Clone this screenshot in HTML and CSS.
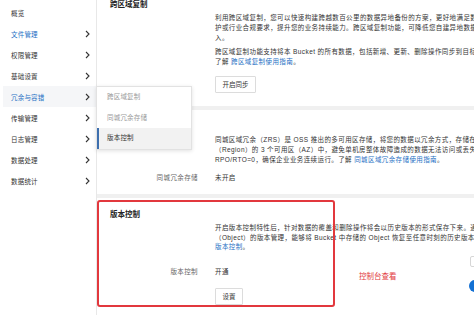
FILE: index.html
```html
<!DOCTYPE html>
<html lang="zh-CN">
<head>
<meta charset="utf-8">
<title>版本控制</title>
<link rel="stylesheet" href="styles.css">
</head>
<body>
<div class="app">
  <aside class="sidebar">
    <ul class="nav">
      <li class="nav-item">概览</li>
      <li class="nav-item is-link">文件管理<svg class="chev" viewBox="0 0 5 8"><polyline points="1,1 4,4 1,7"/></svg></li>
      <li class="nav-item">权限管理<svg class="chev" viewBox="0 0 5 8"><polyline points="1,1 4,4 1,7"/></svg></li>
      <li class="nav-item">基础设置<svg class="chev" viewBox="0 0 5 8"><polyline points="1,1 4,4 1,7"/></svg></li>
      <li class="nav-item is-active">冗余与容错<svg class="chev" viewBox="0 0 5 8"><polyline points="1,1 4,4 1,7"/></svg></li>
      <li class="nav-item">传输管理<svg class="chev" viewBox="0 0 5 8"><polyline points="1,1 4,4 1,7"/></svg></li>
      <li class="nav-item">日志管理<svg class="chev" viewBox="0 0 5 8"><polyline points="1,1 4,4 1,7"/></svg></li>
      <li class="nav-item">数据处理<svg class="chev" viewBox="0 0 5 8"><polyline points="1,1 4,4 1,7"/></svg></li>
      <li class="nav-item">数据统计<svg class="chev" viewBox="0 0 5 8"><polyline points="1,1 4,4 1,7"/></svg></li>
    </ul>
  </aside>

  <main class="main">
    <section class="card card-scrolled">
      <h2 class="card-title">跨区域复制</h2>
      <div class="field">
        <div class="label"></div>
        <div class="content">
          <p class="desc">利用跨区域复制，您可以快速构建跨越数百公里的数据异地备份的方案，更好地满足数据异地容灾保<br>护或行业合规要求，提升您的业务持续能力。跨区域复制功能，可降低您自建异地数据备份带来的成本投<br>入。</p>
          <p class="desc desc-next">跨区域复制功能支持将本 Bucket 的所有数据，包括新增、更新、删除操作同步到目标 Bucket。<br>了解 <a class="link">跨区域复制使用指南</a>。</p>
          <button class="btn btn-gap-l">开启同步</button>
        </div>
      </div>
    </section>

    <section class="card card-zrs">
      <h2 class="card-title">同城冗余存储</h2>
      <div class="field">
        <div class="label"></div>
        <div class="content">
          <p class="desc">同城区域冗余（ZRS）是 OSS 推出的多可用区存储，将您的数据以冗余方式，存储在同一个地域<br>（Region）的 3 个可用区（AZ）中，避免单机房整体故障造成的数据无法访问或丢失，<br>RPO/RTO=0，确保企业业务连续运行。了解 <a class="link">同城区域冗余存储使用指南</a>。</p>
        </div>
      </div>
      <div class="field field-gap-s">
        <div class="label">同城冗余存储</div>
        <div class="content">未开启</div>
      </div>
    </section>

    <section class="card card-last">
      <h2 class="card-title">版本控制</h2>
      <div class="field">
        <div class="label"></div>
        <div class="content">
          <p class="desc">开启版本控制特性后，针对数据的覆盖和删除操作将会以历史版本的形式保存下来。通过文件<br>（Object）的版本管理，能够将 Bucket 中存储的 Object 恢复至任意时刻的历史版本。了解<br><a class="link">版本控制</a>。</p>
        </div>
      </div>
      <div class="field field-gap-l">
        <div class="label">版本控制</div>
        <div class="content">开通</div>
      </div>
      <div class="field field-gap-m">
        <div class="label"></div>
        <div class="content"><button class="btn">设置</button></div>
      </div>
    </section>
  </main>

  <div class="dropdown">
    <div class="dd-item">跨区域复制</div>
    <div class="dd-item">同城冗余存储</div>
    <div class="dd-item is-selected">版本控制</div>
  </div>

  <div class="annot-box"></div>
  <div class="annot-text">控制台查看</div>

  <div class="float-tool float-tool-box"></div>
  <div class="float-tool float-tool-dot"></div>
</div>
</body>
</html>
```

FILE: styles.css
```css
* { box-sizing: border-box; }

body {
  margin: 0;
  width: 474px;
  height: 315px;
  overflow: hidden;
  background: #fff;
  font-family: "Liberation Sans", "Noto Sans CJK SC", sans-serif;
  font-size: 6.5px;
  letter-spacing: 0.4px;
  color: #333;
}

.app {
  position: relative;
  display: flex;
  width: 474px;
  height: 315px;
  overflow: hidden;
}

/* Sidebar */
.sidebar {
  width: 97px;
  flex: none;
  background: #fff;
  border-right: 1px solid #e8e8e8;
  padding-top: 2px;
}

.nav {
  list-style: none;
  margin: 0;
  padding: 0;
}

.nav-item {
  height: 21px;
  display: flex;
  align-items: center;
  justify-content: space-between;
  padding: 0 6px 0 11px;
  color: #333;
  letter-spacing: 0.2px;
}

.nav-item.is-link { color: #2670c4; }

.nav-item.is-active {
  color: #2670c4;
  background: #f5f6f8;
  margin-left: 3px;
  padding-left: 8px;
}

.chev {
  width: 5px;
  height: 8px;
  fill: none;
  stroke: #333;
  stroke-width: 1.1;
}

/* Main */
.main {
  flex: 1;
  min-width: 0;
  display: flex;
  flex-direction: column;
  gap: 4px;
  background: #f0f0f0;
  overflow: hidden;
}

.card {
  flex: none;
  background: #fff;
  padding: 12px 0 12px 13px;
}

.card-scrolled { margin-top: -12px; padding-bottom: 13px; }
.card-zrs { padding-bottom: 11.5px; }
.card-last { flex: 1; }

.card-title {
  margin: 0 0 3px;
  font-size: 7.5px;
  line-height: 10px;
  font-weight: bold;
  letter-spacing: 0;
  color: #222;
}

.field {
  display: grid;
  grid-template-columns: 88px auto;
  column-gap: 17px;
  line-height: 9.5px;
}

.field-gap-s { margin-top: 8.5px; }
.field-gap-l { margin-top: 15px; }
.field-gap-m { margin-top: 11px; }

.label {
  text-align: right;
  color: #666;
  white-space: nowrap;
}

.content {
  white-space: nowrap;
  color: #333;
}

.desc {
  margin: 0;
  line-height: 9.8px;
  white-space: nowrap;
  color: #333;
}

.desc-next { margin-top: 5px; }

.link { color: #2670c4; }

.btn {
  display: block;
  height: 17px;
  padding: 0 6.5px;
  border: 1px solid #dcdcdc;
  border-radius: 1px;
  background: #fff;
  font: inherit;
  color: #333;
  line-height: 15px;
}

.btn-gap-l { margin-top: 9px; }

/* Dropdown (overlays the content) */
.dropdown {
  position: absolute;
  left: 96px;
  top: 86px;
  width: 96px;
  background: #fff;
  border: 1px solid #e2e2e2;
  box-shadow: 0 1px 4px rgba(0, 0, 0, 0.12);
}

.dd-item {
  height: 20.5px;
  line-height: 20.5px;
  padding-left: 10px;
  color: #999;
  letter-spacing: 0.2px;
}

.dd-item.is-selected {
  background: #f2f2f2;
  color: #333;
  box-shadow: inset 2px 0 0 #3d6fae;
}

/* Annotation overlay */
.annot-box {
  position: absolute;
  left: 97px;
  top: 200px;
  width: 238px;
  height: 107px;
  border: 2px solid #e2383d;
  border-radius: 3px;
}

.annot-text {
  position: absolute;
  left: 359px;
  top: 272px;
  font-size: 7.5px;
  line-height: 10px;
  letter-spacing: 0;
  color: #e2383d;
}

/* Floating tools at the right edge */
.float-tool { position: absolute; }

.float-tool-box {
  left: 470px;
  top: 256px;
  width: 12px;
  height: 11px;
  border: 1px solid #d6d6d6;
  border-radius: 2px;
  background: #fff;
}

.float-tool-dot {
  left: 469px;
  top: 280px;
  width: 12px;
  height: 12px;
  border-radius: 50%;
  background: #1270d3;
}
```
